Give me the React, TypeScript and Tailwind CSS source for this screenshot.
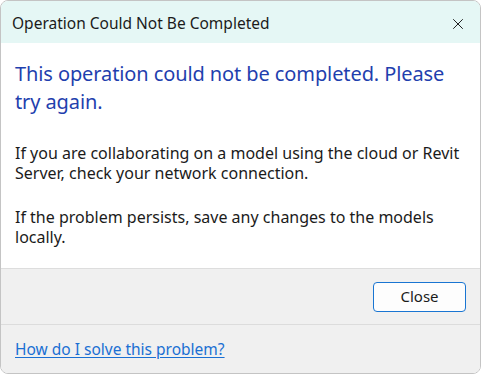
import { X } from 'lucide-react';

export default function App() {
  return (
    <div className="w-[481px] h-[374px] bg-white" style={{ fontFamily: '"Noto Sans", "Open Sans", sans-serif' }}>
      <div className="w-full h-full flex flex-col rounded-[8px] border border-[#c4c4c4] overflow-hidden">
        {/* Title bar */}
        <div className="h-[42px] shrink-0 bg-[#e5f7f5] flex items-center justify-between pl-[11px] pr-[13px] pt-[4px]">
          <span className="text-[15.5px] text-[#1b1b1b]">Operation Could Not Be Completed</span>
          <X size={18} strokeWidth={1.3} className="text-[#1b1b1b]" />
        </div>

        {/* Body */}
        <div className="h-[225px] shrink-0 bg-white px-[14px] pt-[17px]">
          <h1 className="w-[448px] text-[20px] leading-[28px] tracking-[-0.1px] text-[#1f3fae]">
            This operation could not be completed. Please try again.
          </h1>
          <p className="mt-[27px] w-[445px] text-[16px] leading-[20px] text-[#1b1b1b]">
            If you are collaborating on a model using the cloud or Revit Server, check your network connection.
          </p>
          <p className="mt-[24px] w-[420px] text-[16px] leading-[20px] text-[#1b1b1b]">
            If the problem persists, save any changes to the models locally.
          </p>
        </div>

        {/* Button row */}
        <div className="h-[56px] shrink-0 bg-[#f0f0f0] border-t border-[#dddddd] flex items-center justify-end pr-[14px]">
          <button className="w-[93px] h-[30px] rounded-[4px] border border-[#1975d2] bg-[#fdfdfd] text-[15px] text-[#1b1b1b]">
            Close
          </button>
        </div>

        {/* Footer link */}
        <div className="flex-1 bg-[#f0f0f0] border-t border-[#dcdcdc] flex items-center pl-[14px] pt-[1px]">
          <a href="#" className="text-[15.5px] text-[#1a6fd3] underline underline-offset-[2px]">
            How do I solve this problem?
          </a>
        </div>
      </div>
    </div>
  );
}
